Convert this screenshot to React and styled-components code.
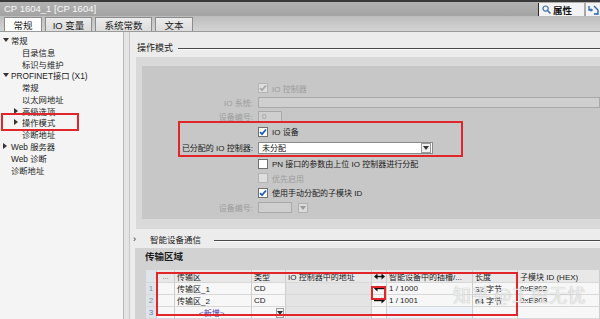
import React from 'react';
import styled, { createGlobalStyle } from 'styled-components';

const FONT = `"Liberation Sans", "Noto Sans CJK SC", sans-serif`;

const GlobalStyle = createGlobalStyle`
  html, body { margin: 0; padding: 0; background: #ececec; }
  #root { width: 600px; height: 319px; overflow: hidden; }
`;

const Frame = styled.div`
   position: relative;
   width: 600px;
   height: 319px;
   overflow: hidden;
   display: flex;
   flex-direction: column;
   font-family: ${FONT};
   color: #1c1c1c;
   background: #ececec;
`;

/* ---------- title + tabs ---------- */

const TitleBar = styled.div`
   height: 14px;
   border-top: 2px solid #3a3a3a;
   background: linear-gradient(#b2b2b2, #a3a3a3);
   display: flex;
   justify-content: space-between;
   align-items: flex-end;
`;

const Title = styled.div`
   padding-left: 4px;
   font-size: 9.5px;
   line-height: 14px;
   color: #f7f7f7;
   align-self: center;
`;

const TitleTools = styled.div`
   display: flex;
   align-items: flex-end;
   gap: 2px;
   height: 13px;
`;

const PropTab = styled.div`
   width: 46px;
   height: 13px;
   box-sizing: border-box;
   background: #f3f3f3;
   border-left: 1px solid #2c2c2c;
   display: flex;
   align-items: center;
   gap: 2px;
   padding-left: 3px;
   font-size: 9.5px;
   font-weight: bold;
   color: #111;
`;

const ToolIcon = styled.div`
   width: 14px;
   height: 13px;
   background: #f3f3f3;
   display: flex;
   align-items: center;
   justify-content: center;
`;

const TabBar = styled.div`
   height: 16px;
   box-sizing: border-box;
   padding-left: 4px;
   background: linear-gradient(#bdbdbd, #d3d3d3);
   display: flex;
   align-items: flex-end;
   gap: 3px;
   border-bottom: 1px solid #9a9a9a;
`;

const Tab = styled.div`
   width: ${p => p.$w}px;
   height: 14px;
   box-sizing: border-box;
   border: 1px solid #8c8c8c;
   border-bottom: none;
   background: ${p => (p.$active ? '#ffffff' : 'linear-gradient(#ececec, #dcdcdc)')};
   font-size: 9.5px;
   color: #1a1a1a;
   display: flex;
   align-items: center;
   justify-content: center;
`;

/* ---------- body ---------- */

const Body = styled.div`
   flex: 1;
   display: flex;
   min-height: 0;
`;

const Sidebar = styled.div`
   width: 123px;
   background: #f4f4f4;
   padding-top: 2px;
`;

const Splitter = styled.div`
   width: 7px;
   box-sizing: border-box;
   background: #e4e4e4;
   border-left: 1px solid #b8b8b8;
   border-right: 1px solid #c8c8c8;
`;

const TreeRow = styled.div`
   height: 11.8px;
   display: flex;
   align-items: center;
   padding-left: ${p => 3 + p.$level * 11}px;
   font-size: 8.3px;
   color: #222;
   white-space: nowrap;
`;

const Twisty = styled.span`
   width: 8px;
   display: inline-flex;
   align-items: center;
`;

const Content = styled.div`
   flex: 1;
   display: flex;
   flex-direction: column;
   background: #ececec;
`;

const SectionHead = styled.div`
   height: 12px;
   margin-top: 9px;
   margin-left: 7px;
   display: flex;
   align-items: center;
   font-size: 9px;
   color: #1a1a1a;
`;

const Rule = styled.div`
   flex: 1;
   margin-left: ${p => p.$gap || 5}px;
   margin-top: ${p => p.$drop || 4}px;
   border-top: 1px solid #4a4a4a;
   border-bottom: 1px solid #fafafa;
`;

const OuterPanel = styled.div`
   margin-top: 4px;
   margin-left: 6px;
   padding: 9px 0 10px 6px;
   background: #d9d9d9;
`;

const InnerPanel = styled.div`
   height: 153px;
   box-sizing: border-box;
   padding-top: 15px;
   background: #c7c7c7;
`;

const FormRow = styled.div`
   display: grid;
   grid-template-columns: 111px 1fr;
   column-gap: 5px;
   height: ${p => p.$h}px;
   align-items: center;
`;

const Label = styled.div`
   text-align: right;
   font-size: 8px;
   color: ${p => (p.$off ? '#9c9c9c' : '#1a1a1a')};
   white-space: nowrap;
`;

const Control = styled.div`
   display: flex;
   align-items: center;
   gap: 4px;
   font-size: 8px;
   color: ${p => (p.$off ? '#9c9c9c' : '#1a1a1a')};
   white-space: nowrap;
`;

const Box = styled.span`
   width: 10px;
   height: 10px;
   box-sizing: border-box;
   border: 1px solid ${p => (p.$off ? '#b4b4b4' : '#707070')};
   background: ${p => (p.$off ? '#dedede' : '#ffffff')};
   display: inline-flex;
   align-items: center;
   justify-content: center;
`;

const Field = styled.div`
   width: ${p => (p.$w ? `${p.$w}px` : 'auto')};
   flex: ${p => (p.$w ? 'none' : 1)};
   height: 11px;
   box-sizing: border-box;
   border: 1px solid ${p => (p.$off ? '#a9a9a9' : '#8a8a8a')};
   background: ${p => (p.$off ? '#cfcfcf' : '#ffffff')};
   color: ${p => (p.$off ? '#9c9c9c' : '#111')};
   font-size: 8px;
   padding-left: 3px;
   display: flex;
   align-items: center;
`;

const SelectBox = styled.div`
   width: ${p => p.$w}px;
   height: 12px;
   box-sizing: border-box;
   display: flex;
   align-items: center;
   border: 1px solid ${p => (p.$off ? '#a9a9a9' : '#8a8a8a')};
   background: ${p => (p.$off ? '#cdcdcd' : '#ffffff')};
   font-size: 8px;
   color: #111;
`;

const SelectText = styled.span`
   flex: 1;
   padding-left: 3px;
`;

const SelectButton = styled.span`
   width: 10px;
   height: 10px;
   box-sizing: border-box;
   border: 1px solid ${p => (p.$off ? '#b0b0b0' : '#9a9a9a')};
   background: ${p => (p.$off ? '#dadada' : '#f1f1f1')};
   margin-right: ${p => (p.$gap ? 0 : 1)}px;
   margin-left: ${p => (p.$gap ? 2 : 0)}px;
   display: inline-flex;
   align-items: center;
   justify-content: center;
`;

const SubHead = styled.div`
   height: 21px;
   display: flex;
   align-items: center;
   padding-left: 3px;
   font-size: 8.5px;
   color: #1a1a1a;
`;

const Chevron = styled.span`
   width: 17px;
   font-size: 9px;
`;

const TransferPanel = styled.div`
   flex: 1;
   margin-left: 5px;
   background: #d2d2d2;
   padding-left: 10px;
`;

const TransferTitle = styled.div`
   height: 16px;
   display: flex;
   align-items: center;
   font-size: 9.5px;
   font-weight: bold;
   color: #1a1a1a;
`;

const Table = styled.div`
   margin-top: 6px;
   margin-left: 1px;
`;

const COLS = '11px 18px 77px 34px 86px 15px 86px 45px 82px';

const TRow = styled.div`
   display: grid;
   grid-template-columns: ${COLS};
   height: ${p => p.$h}px;
   background: ${p => (p.$head ? '#e8e8e8' : '#f7f7f7')};
`;

const TCell = styled.div`
   box-sizing: border-box;
   border-right: 1px solid #cdcdcd;
   border-bottom: 1px solid #d8d8d8;
   padding-left: ${p => (p.$pad !== undefined ? p.$pad : 2)}px;
   background: ${p => p.$bg || 'transparent'};
   color: ${p => p.$color || '#1a1a1a'};
   font-size: 8px;
   display: flex;
   align-items: center;
   justify-content: ${p => (p.$center ? 'center' : 'flex-start')};
   white-space: nowrap;
   overflow: hidden;
`;

/* ---------- overlays ---------- */

const Mark = styled.div`
   position: absolute;
   left: ${p => p.$x}px;
   top: ${p => p.$y}px;
   width: ${p => p.$w}px;
   height: ${p => p.$h}px;
   box-sizing: border-box;
   border: 2px solid #e0252b;
   pointer-events: none;
`;

const Watermark = styled.div`
   position: absolute;
   left: 453px;
   top: 281px;
   font-size: 18px;
   letter-spacing: 0.5px;
   color: rgba(255, 255, 255, 0.78);
   text-shadow: 0 0 1px rgba(90, 90, 90, 0.55);
   font-family: "Noto Sans CJK SC", sans-serif;
   white-space: nowrap;
`;

/* ---------- small drawings ---------- */

const Down = ({ color = '#333' }) => (
   <svg width="6" height="4" viewBox="0 0 6 4"><path d="M0 0h6L3 4z" fill={color} /></svg>
);

const Right = () => (
   <svg width="4" height="6" viewBox="0 0 4 6"><path d="M0 0l4 3-4 3z" fill="#333" /></svg>
);

const Tick = ({ off }) => (
   <svg width="8" height="8" viewBox="0 0 8 8">
      <path d="M1 4.2l2 2L7 1.5" fill="none" stroke={off ? '#a8a8a8' : '#1d5fc4'} strokeWidth="1.8" />
   </svg>
);

const Arrow = ({ dir }) => (
   <svg width="11" height="7" viewBox="0 0 11 7">
      {dir !== 'right' && <path d="M0 3.5L3.5 0.5v6z" fill="#111" />}
      {dir !== 'left' && <path d="M11 3.5L7.5 0.5v6z" fill="#111" />}
      <rect x={dir === 'right' ? 0 : 2} y="2.8" width={dir === 'both' ? 7 : 8.5} height="1.4" fill="#111" />
   </svg>
);

const Magnifier = () => (
   <svg width="9" height="9" viewBox="0 0 9 9">
      <circle cx="3.6" cy="3.6" r="2.6" fill="none" stroke="#3f6fb5" strokeWidth="1.2" />
      <path d="M5.6 5.6L8.5 8.5" stroke="#3f6fb5" strokeWidth="1.5" />
   </svg>
);

const DockIcon = () => (
   <svg width="11" height="10" viewBox="0 0 11 10">
      <path d="M1 1v4h3" fill="none" stroke="#1e5fb8" strokeWidth="1.3" />
      <path d="M3 3.5L4.5 5 3 6.5" fill="none" stroke="#1e5fb8" strokeWidth="1" />
      <path d="M6 1l4 4M10 5v4H6" fill="none" stroke="#1e5fb8" strokeWidth="1.3" />
   </svg>
);

/* ---------- parts ---------- */

const tree = [
   { level: 0, open: true, text: '常规' },
   { level: 1, text: '目录信息' },
   { level: 1, text: '标识与维护' },
   { level: 0, open: true, text: 'PROFINET接口 (X1)' },
   { level: 1, text: '常规' },
   { level: 1, text: '以太网地址' },
   { level: 1, open: false, text: '高级选项' },
   { level: 1, open: false, text: '操作模式' },
   { level: 1, text: '诊断地址' },
   { level: 0, open: false, text: 'Web 服务器' },
   { level: 0, text: 'Web 诊断' },
   { level: 0, text: '诊断地址' },
];

const Tree = () => (
   <div>
      {tree.map((item, i) => (
         <TreeRow key={i} $level={item.level}>
            <Twisty>{item.open === true ? <Down /> : item.open === false ? <Right /> : null}</Twisty>
            {item.text}
         </TreeRow>
      ))}
   </div>
);

const Check = ({ checked, off, children }) => (
   <Control $off={off}>
      <Box $off={off}>{checked && <Tick off={off} />}</Box>
      {children}
   </Control>
);

const Select = ({ width, value, off }) => (
   <SelectBox $w={width} $off={off}>
      <SelectText>{value}</SelectText>
      <SelectButton $off={off}><Down color={off ? '#9a9a9a' : '#333'} /></SelectButton>
   </SelectBox>
);

const OperatingMode = () => (
   <OuterPanel>
      <InnerPanel>
         <FormRow $h={14}>
            <Label />
            <Check checked off>IO 控制器</Check>
         </FormRow>
         <FormRow $h={14}>
            <Label $off>IO 系统:</Label>
            <Control><Field $off /></Control>
         </FormRow>
         <FormRow $h={15}>
            <Label $off>设备编号:</Label>
            <Control><Field $off $w={24}>0</Field></Control>
         </FormRow>
         <FormRow $h={15}>
            <Label />
            <Check checked>IO 设备</Check>
         </FormRow>
         <FormRow $h={17}>
            <Label>已分配的 IO 控制器:</Label>
            <Control><Select width={175} value="未分配" /></Control>
         </FormRow>
         <FormRow $h={15}>
            <Label />
            <Check>PN 接口的参数由上位 IO 控制器进行分配</Check>
         </FormRow>
         <FormRow $h={14}>
            <Label />
            <Check off>优先启用</Check>
         </FormRow>
         <FormRow $h={15}>
            <Label />
            <Check checked>使用手动分配的子模块 ID</Check>
         </FormRow>
         <FormRow $h={15}>
            <Label $off>设备编号:</Label>
            <Control>
               <Field $off $w={34} />
               <SelectButton $off $gap><Down color="#9a9a9a" /></SelectButton>
            </Control>
         </FormRow>
      </InnerPanel>
   </OuterPanel>
);

const rows = [
   { n: '1', name: '传输区_1', type: 'CD', dir: 'left', slot: '1 / 1000', len: '32 字节', id: '0xE802' },
   { n: '2', name: '传输区_2', type: 'CD', dir: 'right', slot: '1 / 1001', len: '64 字节', id: '0xE803' },
];

const NUM_BG = '#dfe4ea';

const TransferTable = () => (
   <Table>
      <TRow $head $h={13}>
         <TCell $bg={NUM_BG} />
         <TCell $center $pad={0} $color="#777">...</TCell>
         <TCell>传输区</TCell>
         <TCell>类型</TCell>
         <TCell>IO 控制器中的地址</TCell>
         <TCell $center $pad={0}><Arrow dir="both" /></TCell>
         <TCell>智能设备中的插槽/...</TCell>
         <TCell>长度</TCell>
         <TCell>子模块 ID (HEX)</TCell>
      </TRow>
      {rows.map(r => (
         <TRow key={r.n} $h={12}>
            <TCell $bg={NUM_BG} $center $pad={0} $color="#8793a3">{r.n}</TCell>
            <TCell />
            <TCell>{r.name}</TCell>
            <TCell>{r.type}</TCell>
            <TCell $bg="#e4e4e4" />
            <TCell $center $pad={0}><Arrow dir={r.dir} /></TCell>
            <TCell>{r.slot}</TCell>
            <TCell>{r.len}</TCell>
            <TCell>{r.id}</TCell>
         </TRow>
      ))}
      <TRow $h={12}>
         <TCell $bg={NUM_BG} $center $pad={0} $color="#5d7fb0">3</TCell>
         <TCell />
         <TCell $pad={24} $color="#4b38b8">&lt;新增&gt;</TCell>
         <TCell $pad={24}>
            <SelectButton><Down /></SelectButton>
         </TCell>
         <TCell $bg="#e4e4e4" />
         <TCell />
         <TCell $bg="#eef3fb" />
         <TCell />
         <TCell />
      </TRow>
   </Table>
);

const tabs = [
   { text: '常规', w: 38, active: true },
   { text: 'IO 变量', w: 47 },
   { text: '系统常数', w: 57 },
   { text: '文本', w: 38 },
];

export default function App() {
   return (
      <Frame>
         <GlobalStyle />
         <TitleBar>
            <Title>CP 1604_1 [CP 1604]</Title>
            <TitleTools>
               <PropTab><Magnifier />属性</PropTab>
               <ToolIcon><DockIcon /></ToolIcon>
            </TitleTools>
         </TitleBar>
         <TabBar>
            {tabs.map(t => (
               <Tab key={t.text} $w={t.w} $active={t.active}>{t.text}</Tab>
            ))}
         </TabBar>
         <Body>
            <Sidebar>
               <Tree />
            </Sidebar>
            <Splitter />
            <Content>
               <SectionHead>
                  操作模式
                  <Rule />
               </SectionHead>
               <OperatingMode />
               <SubHead>
                  <Chevron>›</Chevron>
                  智能设备通信
                  <Rule $gap={13} $drop={5} />
               </SubHead>
               <TransferPanel>
                  <TransferTitle>传输区域</TransferTitle>
                  <TransferTable />
               </TransferPanel>
            </Content>
         </Body>

         <Mark $x={1} $y={113} $w={78} $h={18} />
         <Mark $x={178} $y={121} $w={285} $h={36} />
         <Mark $x={156} $y={272} $w={362} $h={44} />
         <Mark $x={371} $y={286} $w={15} $h={14} />
         <Watermark>知乎 @工控无忧</Watermark>
      </Frame>
   );
}
